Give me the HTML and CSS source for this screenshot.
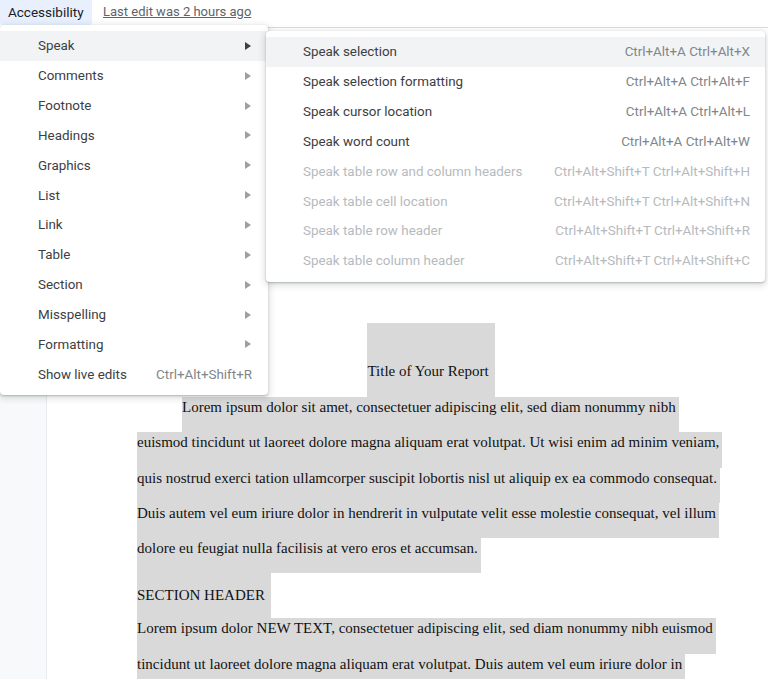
FILE: index.html
```html
<!DOCTYPE html>
<html>
<head>
<meta charset="utf-8">
<link rel="stylesheet" href="styles.css">
</head>
<body>
<div class="app">
  <div class="toolbar">
    <div class="menu-btn">Accessibility</div>
    <div class="last-edit">Last edit was 2 hours ago</div>
  </div>
  <div class="workspace">
    <div class="gutter"></div>
    <div class="page">
      <div class="column">
        <div class="line title"><span class="sel">Title of Your Report</span></div>
        <div class="line indent"><span class="sel">Lorem ipsum dolor sit amet, consectetuer adipiscing elit, sed diam nonummy nibh</span></div>
        <div class="line"><span class="sel">euismod tincidunt ut laoreet dolore magna aliquam erat volutpat. Ut wisi enim ad minim veniam,</span></div>
        <div class="line"><span class="sel">quis nostrud exerci tation ullamcorper suscipit lobortis nisl ut aliquip ex ea commodo consequat.</span></div>
        <div class="line"><span class="sel">Duis autem vel eum iriure dolor in hendrerit in vulputate velit esse molestie consequat, vel illum</span></div>
        <div class="line"><span class="sel">dolore eu feugiat nulla facilisis at vero eros et accumsan.</span></div>
        <div class="line section"><span class="sel">SECTION HEADER</span></div>
        <div class="line"><span class="sel">Lorem ipsum dolor NEW TEXT, consectetuer adipiscing elit, sed diam nonummy nibh euismod</span></div>
        <div class="line"><span class="sel">tincidunt ut laoreet dolore magna aliquam erat volutpat. Duis autem vel eum iriure dolor in</span></div>
      </div>
    </div>
  </div>

  <div class="menu main-menu">
    <div class="item active"><span class="label">Speak</span><span class="arrow"></span></div>
    <div class="item"><span class="label">Comments</span><span class="arrow"></span></div>
    <div class="item"><span class="label">Footnote</span><span class="arrow"></span></div>
    <div class="item"><span class="label">Headings</span><span class="arrow"></span></div>
    <div class="item"><span class="label">Graphics</span><span class="arrow"></span></div>
    <div class="item"><span class="label">List</span><span class="arrow"></span></div>
    <div class="item"><span class="label">Link</span><span class="arrow"></span></div>
    <div class="item"><span class="label">Table</span><span class="arrow"></span></div>
    <div class="item"><span class="label">Section</span><span class="arrow"></span></div>
    <div class="item"><span class="label">Misspelling</span><span class="arrow"></span></div>
    <div class="item"><span class="label">Formatting</span><span class="arrow"></span></div>
    <div class="item"><span class="label">Show live edits</span><span class="shortcut">Ctrl+Alt+Shift+R</span></div>
  </div>

  <div class="menu sub-menu">
    <div class="item active"><span class="label">Speak selection</span><span class="shortcut">Ctrl+Alt+A Ctrl+Alt+X</span></div>
    <div class="item"><span class="label">Speak selection formatting</span><span class="shortcut">Ctrl+Alt+A Ctrl+Alt+F</span></div>
    <div class="item"><span class="label">Speak cursor location</span><span class="shortcut">Ctrl+Alt+A Ctrl+Alt+L</span></div>
    <div class="item"><span class="label">Speak word count</span><span class="shortcut">Ctrl+Alt+A Ctrl+Alt+W</span></div>
    <div class="item disabled"><span class="label">Speak table row and column headers</span><span class="shortcut">Ctrl+Alt+Shift+T Ctrl+Alt+Shift+H</span></div>
    <div class="item disabled"><span class="label">Speak table cell location</span><span class="shortcut">Ctrl+Alt+Shift+T Ctrl+Alt+Shift+N</span></div>
    <div class="item disabled"><span class="label">Speak table row header</span><span class="shortcut">Ctrl+Alt+Shift+T Ctrl+Alt+Shift+R</span></div>
    <div class="item disabled"><span class="label">Speak table column header</span><span class="shortcut">Ctrl+Alt+Shift+T Ctrl+Alt+Shift+C</span></div>
  </div>
</div>
</body>
</html>
```

FILE: styles.css
```css
* { box-sizing: border-box; }
html, body { margin: 0; padding: 0; }
body {
  width: 768px;
  height: 679px;
  overflow: hidden;
  background: #ffffff;
  font-family: Roboto, "Liberation Sans", Arial, sans-serif;
}
.app {
  position: relative;
  width: 768px;
  height: 679px;
  display: flex;
  flex-direction: column;
}
.toolbar {
  height: 28px;
  flex: none;
  display: flex;
  align-items: flex-start;
  border-bottom: 1px solid #dadce0;
  background: #fff;
}
.menu-btn {
  height: 25px;
  padding: 0 8px;
  width: 92px;
  line-height: 24px;
  font-size: 13.5px;
  color: #202124;
  background: #e8f0fe;
  border-radius: 0 0 3px 3px;
}
.last-edit {
  margin-left: 11px;
  line-height: 24px;
  font-size: 13px;
  color: #5f6368;
  text-decoration: underline;
}
.workspace {
  flex: 1;
  display: flex;
  min-height: 0;
}
.gutter {
  width: 47px;
  flex: none;
  background: #f8f9fa;
  border-right: 1px solid #e8eaed;
}
.page {
  flex: 1;
  background: #fff;
  padding: 295px 0 0 90px;
  overflow: hidden;
}
.column {
  width: 582px;
  font-family: "Liberation Serif", "Times New Roman", serif;
  font-size: 15px;
  color: #111;
}
.line {
  height: 35.3px;
  white-space: nowrap;
}
.line .sel {
  display: inline-block;
  height: 100%;
  line-height: 21px;
  background: #d9d9d9;
  padding-right: 3px;
}
.line.title {
  height: 74px;
  text-align: center;
  padding-left: 6px;
}
.line.title .sel {
  padding-top: 38px;
  padding-right: 6px;
}
.line.indent { padding-left: 45px; }
.line.section { height: 45px; }
.line.section .sel { padding-top: 12px; padding-right: 6px; }

/* Menus */
.menu {
  position: absolute;
  background: #fff;
  border-radius: 4px;
  box-shadow: 0 2px 6px 2px rgba(60, 64, 67, 0.15), 0 1px 2px rgba(60, 64, 67, 0.3);
  padding: 6px 0;
  font-size: 13.4px;
  color: #3c4043;
}
.main-menu {
  left: 0;
  top: 25px;
  width: 268px;
}
.sub-menu {
  left: 266px;
  top: 31px;
  width: 499px;
}
.item {
  height: 29.85px;
  display: flex;
  align-items: center;
  justify-content: space-between;
  white-space: nowrap;
}
.main-menu .item { padding: 0 16px 0 38px; }
.sub-menu .item { padding: 0 15px 0 37px; }
.item.active { background: #f1f3f4; }
.shortcut { color: #80868b; }
.item.disabled .label, .item.disabled .shortcut { color: #b6babe; }
.arrow {
  width: 0;
  height: 0;
  border-top: 4px solid transparent;
  border-bottom: 4px solid transparent;
  border-left: 6px solid #9aa0a6;
  margin-right: 1px;
}
.item.active .arrow { border-left-color: #3c4043; }
```
